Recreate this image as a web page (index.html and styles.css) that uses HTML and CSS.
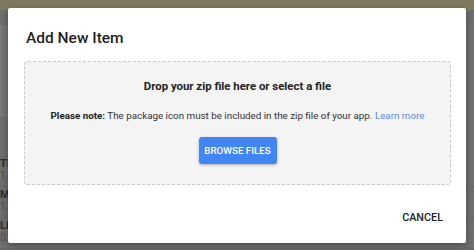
FILE: index.html
```html
<!DOCTYPE html>
<html lang="en">
<head>
  <meta charset="UTF-8">
  <meta name="viewport" content="width=device-width, initial-scale=1.0">
  <title>Add New Item</title>
  <link rel="stylesheet" href="styles.css">
</head>
<body>
  <div class="page">
    <div class="topbar"></div>
    <div class="page-body">
      <div class="side-card"></div>
      <div class="rows">
        <div class="row"><strong>TITLE</strong><span>1.0</span></div>
        <div class="row"><strong>MAIN</strong><span>1.1</span></div>
        <div class="row"><strong>Live</strong><span>0.1</span></div>
      </div>
    </div>
  </div>

  <div class="overlay">
    <div class="dialog">
      <h1 class="dialog-title">Add New Item</h1>

      <div class="dropzone">
        <p class="drop-title">Drop your zip file here or select a file</p>
        <p class="drop-note"><strong>Please note:</strong> The package icon must be included in the zip file of your app. <a href="#">Learn more</a></p>
        <button class="browse-btn">BROWSE FILES</button>
      </div>

      <div class="dialog-actions">
        <button class="text-btn">CANCEL</button>
      </div>
    </div>
  </div>
</body>
</html>
```

FILE: styles.css
```css
html, body {
  margin: 0;
  padding: 0;
  height: 100%;
}
body {
  font-family: Roboto, "Noto Sans", Arial, sans-serif;
  background: #6e6e6e;
  overflow: hidden;
}

/* page behind the modal */
.page {
  height: 100%;
}
.topbar {
  height: 10px;
  background: #7e7a5e;
}
.page-body {
  padding-top: 16px;
}
.side-card {
  height: 88px;
  margin-right: 20px;
  background: #747474;
  border: 1px solid #7e7e7e;
}
.rows {
  margin-top: 40px;
}
.row {
  display: flex;
  flex-direction: column;
  padding: 2px 0 4px 0;
  border-bottom: 1px solid #656565;
  color: #2a2a2a;
  font-size: 11px;
  line-height: 12px;
}
.row span {
  color: #4a4a4a;
  font-size: 10px;
}

/* modal */
.overlay {
  position: absolute;
  top: 0;
  left: 0;
  right: 0;
  bottom: 0;
  padding: 8px;
}
.dialog {
  background: #fff;
  height: 235px;
  box-sizing: border-box;
  border-radius: 2px;
  box-shadow: 0 2px 6px rgba(0,0,0,0.35);
  padding: 20px 15px 0 16px;
  display: flex;
  flex-direction: column;
}
.dialog-title {
  margin: 0 0 0 2px;
  font-size: 15.5px;
  font-weight: 500;
  color: #1f1f1f;
  line-height: 20px;
}
.dropzone {
  margin-top: 13px;
  height: 124px;
  box-sizing: border-box;
  background: #f4f4f4;
  border: 1px dashed #c9c9c9;
  border-radius: 4px;
  display: flex;
  flex-direction: column;
  align-items: center;
  padding-top: 17px;
}
.drop-title {
  margin: 0;
  font-size: 11.4px;
  font-weight: 700;
  color: #222;
  line-height: 14px;
}
.drop-note {
  margin: 17px 0 0 0;
  font-size: 9.8px;
  color: #333;
  line-height: 12px;
}
.drop-note strong {
  color: #222;
}
.drop-note a {
  color: #5c8ee6;
  text-decoration: none;
}
.browse-btn {
  margin-top: 15px;
  width: 78px;
  height: 27px;
  border: none;
  border-radius: 3px;
  background: #4285f4;
  color: #fff;
  font-family: inherit;
  font-size: 9.8px;
  font-weight: 500;
  box-shadow: 0 1px 3px rgba(0,0,0,0.3);
  padding: 0;
}
.dialog-actions {
  display: flex;
  justify-content: flex-end;
  margin-top: 22px;
}
.text-btn {
  border: none;
  background: none;
  font-family: inherit;
  font-size: 10.8px;
  font-weight: 500;
  color: #222;
  padding: 0 8px;
  height: 20px;
}
```
